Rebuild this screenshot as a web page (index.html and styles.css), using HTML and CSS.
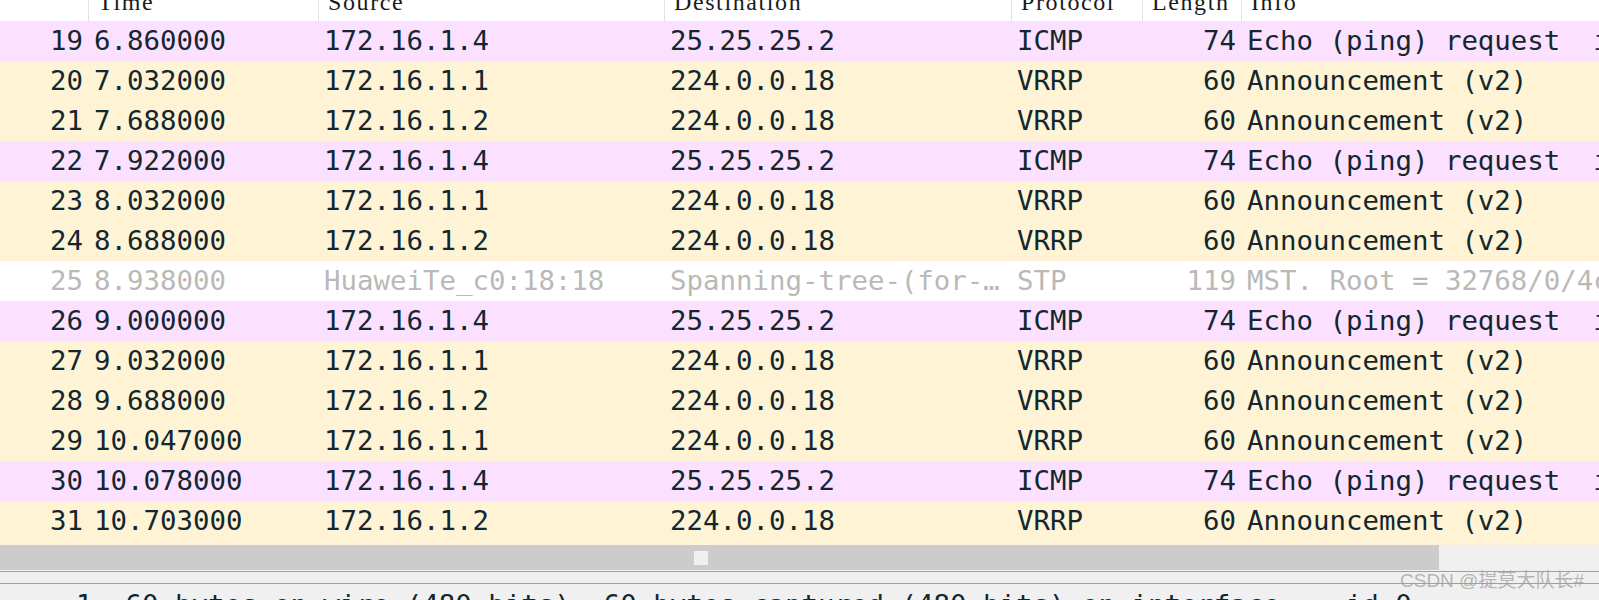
FILE: index.html
```html
<!DOCTYPE html>
<html>
<head>
<meta charset="utf-8">
<link rel="stylesheet" href="styles.css">
</head>
<body>
<div class="app">
  <div class="packets">
    <div class="hrow">
      <div class="hcell"><span>No.</span></div>
      <div class="hcell"><span>Time</span></div>
      <div class="hcell"><span>Source</span></div>
      <div class="hcell"><span>Destination</span></div>
      <div class="hcell"><span>Protocol</span></div>
      <div class="hcell"><span>Length</span></div>
      <div class="hcell"><span>Info</span></div>
    </div>

    <div class="row icmp"><div class="c num">19</div><div class="c">6.860000</div><div class="c">172.16.1.4</div><div class="c">25.25.25.2</div><div class="c">ICMP</div><div class="c num">74</div><div class="c">Echo (ping) request  id=0x0001, seq=19/4864, ttl=64</div></div>
    <div class="row vrrp"><div class="c num">20</div><div class="c">7.032000</div><div class="c">172.16.1.1</div><div class="c">224.0.0.18</div><div class="c">VRRP</div><div class="c num">60</div><div class="c">Announcement (v2)</div></div>
    <div class="row vrrp"><div class="c num">21</div><div class="c">7.688000</div><div class="c">172.16.1.2</div><div class="c">224.0.0.18</div><div class="c">VRRP</div><div class="c num">60</div><div class="c">Announcement (v2)</div></div>
    <div class="row icmp"><div class="c num">22</div><div class="c">7.922000</div><div class="c">172.16.1.4</div><div class="c">25.25.25.2</div><div class="c">ICMP</div><div class="c num">74</div><div class="c">Echo (ping) request  id=0x0001, seq=20/5120, ttl=64</div></div>
    <div class="row vrrp"><div class="c num">23</div><div class="c">8.032000</div><div class="c">172.16.1.1</div><div class="c">224.0.0.18</div><div class="c">VRRP</div><div class="c num">60</div><div class="c">Announcement (v2)</div></div>
    <div class="row vrrp"><div class="c num">24</div><div class="c">8.688000</div><div class="c">172.16.1.2</div><div class="c">224.0.0.18</div><div class="c">VRRP</div><div class="c num">60</div><div class="c">Announcement (v2)</div></div>
    <div class="row stp"><div class="c num">25</div><div class="c">8.938000</div><div class="c">HuaweiTe_c0:18:18</div><div class="c">Spanning-tree-(for-…</div><div class="c">STP</div><div class="c num">119</div><div class="c">MST. Root = 32768/0/4c:1f:cc:c0:18:18  Cost = 0</div></div>
    <div class="row icmp"><div class="c num">26</div><div class="c">9.000000</div><div class="c">172.16.1.4</div><div class="c">25.25.25.2</div><div class="c">ICMP</div><div class="c num">74</div><div class="c">Echo (ping) request  id=0x0001, seq=21/5376, ttl=64</div></div>
    <div class="row vrrp"><div class="c num">27</div><div class="c">9.032000</div><div class="c">172.16.1.1</div><div class="c">224.0.0.18</div><div class="c">VRRP</div><div class="c num">60</div><div class="c">Announcement (v2)</div></div>
    <div class="row vrrp"><div class="c num">28</div><div class="c">9.688000</div><div class="c">172.16.1.2</div><div class="c">224.0.0.18</div><div class="c">VRRP</div><div class="c num">60</div><div class="c">Announcement (v2)</div></div>
    <div class="row vrrp"><div class="c num">29</div><div class="c">10.047000</div><div class="c">172.16.1.1</div><div class="c">224.0.0.18</div><div class="c">VRRP</div><div class="c num">60</div><div class="c">Announcement (v2)</div></div>
    <div class="row icmp"><div class="c num">30</div><div class="c">10.078000</div><div class="c">172.16.1.4</div><div class="c">25.25.25.2</div><div class="c">ICMP</div><div class="c num">74</div><div class="c">Echo (ping) request  id=0x0001, seq=22/5632, ttl=64</div></div>
    <div class="row vrrp last"><div class="c num">31</div><div class="c">10.703000</div><div class="c">172.16.1.2</div><div class="c">224.0.0.18</div><div class="c">VRRP</div><div class="c num">60</div><div class="c">Announcement (v2)</div></div>
  </div>

  <div class="hscroll">
    <div class="handle"><div class="grip"></div></div>
    <div class="track"></div>
  </div>

  <div class="splitter"></div>

  <div class="details">1: 60 bytes on wire (480 bits), 60 bytes captured (480 bits) on interface -, id 0</div>

  <div class="watermark">CSDN @提莫大队长#</div>
</div>
</body>
</html>
```

FILE: styles.css
```css
html, body {
  margin: 0;
  padding: 0;
  overflow: hidden;
  background: #f0f0f0;
}

.app {
  position: relative;
  width: 1599px;
  height: 600px;
  overflow: hidden;
}

.packets {
  background: #ffffff;
}

.hrow,
.row {
  display: grid;
  grid-template-columns: 88px 230px 346px 347px 131px 99px 358px;
}

.hrow {
  height: 21px;
  background: #ffffff;
  overflow: hidden;
}

.hcell {
  height: 21px;
  overflow: hidden;
  border-left: 1px solid #e2e2e2;
  box-sizing: border-box;
  padding-left: 9px;
  font-family: "Liberation Serif", "DejaVu Serif", serif;
  font-size: 24px;
  letter-spacing: 1.6px;
  color: #1a1a1a;
}

.hcell:first-child {
  border-left: none;
}

.hcell:first-child span {
  visibility: hidden;
}

.hcell span {
  display: block;
  line-height: 20px;
  margin-top: -8px;
  white-space: nowrap;
}

.row {
  height: 40px;
  font-family: "DejaVu Sans Mono", "Liberation Mono", monospace;
  font-size: 27.4px;
  line-height: 39px;
  color: #12272e;
}

.row.last {
  height: 44px;
}

.row.icmp {
  background: #fce0ff;
}

.row.vrrp {
  background: #fff3d6;
}

.row.stp {
  background: #ffffff;
  color: #b9b9b6;
}

.c {
  padding-left: 6px;
  white-space: pre;
  overflow: hidden;
}

.c.num {
  padding-left: 0;
  padding-right: 5px;
  text-align: right;
}

.hscroll {
  display: flex;
  height: 25px;
}

.handle {
  width: 1439px;
  background: #cccccc;
  display: flex;
  align-items: center;
  padding-left: 694px;
  box-sizing: border-box;
}

.grip {
  width: 14px;
  height: 14px;
  background: #f0f0f0;
}

.track {
  flex: 1;
  background: #f0f0f0;
}

.splitter {
  margin-top: 1px;
  height: 11px;
  border-top: 1px solid #a0a0a0;
  border-bottom: 1px solid #a0a0a0;
  background: #f0f0f0;
}

.details {
  padding-top: 5px;
  padding-left: 76px;
  font-family: "DejaVu Sans Mono", "Liberation Mono", monospace;
  font-size: 27.4px;
  line-height: 32px;
  color: #12272e;
  white-space: pre;
}

.watermark {
  position: absolute;
  left: 1400px;
  top: 570px;
  font-family: "Liberation Sans", "Noto Sans CJK SC", sans-serif;
  font-size: 19px;
  line-height: 22px;
  color: rgba(160, 160, 160, 0.75);
  white-space: nowrap;
}
```
